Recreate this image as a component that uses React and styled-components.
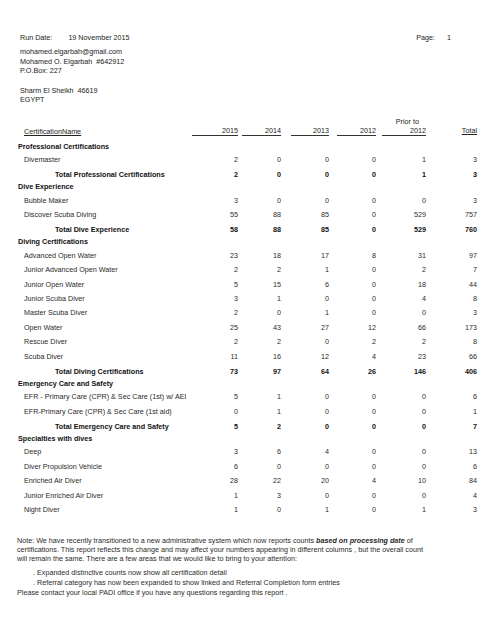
import styled, { createGlobalStyle } from "styled-components";

const GlobalStyle = createGlobalStyle`
  body {
    margin: 0;
    background: #fff;
    color: #222;
    font-family: "Liberation Sans", Arial, sans-serif;
    font-size: 7.2px;
  }
`;

const COLS = [52, 43, 48, 47, 50, 51];
const RULES = [46, 39, 38, 39, 44];

const sections = [
  {
    title: "Professional Certifications",
    items: [["Divemaster", [2, 0, 0, 0, 1, 3]]],
    total: ["Total Professional Certifications", [2, 0, 0, 0, 1, 3]],
  },
  {
    title: "Dive Experience",
    items: [
      ["Bubble Maker", [3, 0, 0, 0, 0, 3]],
      ["Discover Scuba Diving", [55, 88, 85, 0, 529, 757]],
    ],
    total: ["Total Dive Experience", [58, 88, 85, 0, 529, 760]],
  },
  {
    title: "Diving Certifications",
    items: [
      ["Advanced Open Water", [23, 18, 17, 8, 31, 97]],
      ["Junior Advanced Open Water", [2, 2, 1, 0, 2, 7]],
      ["Junior Open Water", [5, 15, 6, 0, 18, 44]],
      ["Junior Scuba Diver", [3, 1, 0, 0, 4, 8]],
      ["Master Scuba Diver", [2, 0, 1, 0, 0, 3]],
      ["Open Water", [25, 43, 27, 12, 66, 173]],
      ["Rescue Diver", [2, 2, 0, 2, 2, 8]],
      ["Scuba Diver", [11, 16, 12, 4, 23, 66]],
    ],
    total: ["Total Diving Certifications", [73, 97, 64, 26, 146, 406]],
  },
  {
    title: "Emergency Care and Safety",
    items: [
      ["EFR - Primary Care (CPR) & Sec Care (1st) w/ AED", [5, 1, 0, 0, 0, 6]],
      ["EFR-Primary Care (CPR) & Sec Care (1st aid)", [0, 1, 0, 0, 0, 1]],
    ],
    total: ["Total Emergency Care and Safety", [5, 2, 0, 0, 0, 7]],
  },
  {
    title: "Specialties with dives",
    items: [
      ["Deep", [3, 6, 4, 0, 0, 13]],
      ["Diver Propulsion Vehicle", [6, 0, 0, 0, 0, 6]],
      ["Enriched Air Diver", [28, 22, 20, 4, 10, 84]],
      ["Junior Enriched Air Diver", [1, 3, 0, 0, 0, 4]],
      ["Night Diver", [1, 0, 1, 0, 1, 3]],
    ],
  },
];

const Page = styled.div`
  width: 495px;
  padding: 33px 0 20px 18px;
  box-sizing: border-box;
`;

const TopLine = styled.div`
  display: flex;
  justify-content: space-between;
  padding: 0 44px 0 2px;
  line-height: 10px;
`;

const Pair = styled.div`
  display: flex;
  gap: ${(p) => p.$gap}px;
`;

const Address = styled.div`
  margin-top: ${(p) => p.$top}px;
  padding-left: 2px;
  line-height: 9.5px;
`;

const Table = styled.div`
  margin-top: 12.5px;
  display: flex;
  flex-direction: column;
`;

const HeadRow = styled.div`
  display: flex;
  align-items: flex-end;
  margin-bottom: 4px;
`;

const Row = styled.div`
  display: flex;
  align-items: center;
  height: ${(p) => p.$h}px;
  padding-top: ${(p) => p.$pt || 0}px;
  box-sizing: border-box;
  font-weight: ${(p) => (p.$bold ? "bold" : "normal")};
  color: ${(p) => (p.$bold ? "#111" : "#2a2a2a")};
`;

const Name = styled.div`
  width: 168px;
  flex: none;
  box-sizing: border-box;
  padding-left: ${(p) => p.$indent}px;
  white-space: nowrap;
  overflow: hidden;
`;

const Num = styled.div`
  width: ${(p) => p.$w}px;
  flex: none;
  text-align: right;
  white-space: nowrap;
`;

const HeadCell = styled.div`
  width: ${(p) => p.$w}px;
  flex: none;
  display: flex;
  justify-content: flex-end;
`;

const Ruled = styled.div`
  width: ${(p) => p.$w}px;
  border-bottom: 1px solid #333;
  text-align: right;
  line-height: 9px;
`;

const Underlined = styled.span`
  text-decoration: underline;
  line-height: 9px;
  padding-bottom: 1px;
`;

const Note = styled.div`
  margin-top: 20.5px;
  margin-left: -1px;
  color: #2a2a2a;
`;

const Para = styled.p`
  margin: 0;
  line-height: 8.7px;
`;

const Bullet = styled.p`
  margin: ${(p) => p.$top}px 0 0 16px;
  line-height: 10px;
`;

const Closing = styled.p`
  margin: 0;
  line-height: 9px;
`;

const Values = ({ values }) =>
  values.map((v, i) => (
    <Num key={i} $w={COLS[i]}>
      {v}
    </Num>
  ));

export default function App() {
  return (
    <>
      <GlobalStyle />
      <Page>
        <TopLine>
          <Pair $gap={16}>
            <span>Run Date:</span>
            <span>19 November 2015</span>
          </Pair>
          <Pair $gap={12}>
            <span>Page:</span>
            <span>1</span>
          </Pair>
        </TopLine>
        <Address $top={4.3}>
          mohamed.elgarbah@gmail.com
          <br />
          Mohamed O. Elgarbah&nbsp;&nbsp;#642912
          <br />
          P.O.Box: 227
        </Address>
        <Address $top={10}>
          Sharm El Sheikh&nbsp;&nbsp;46619
          <br />
          EGYPT
        </Address>

        <Table>
          <HeadRow>
            <Name $indent={6}>
              <Underlined>CertificationName</Underlined>
            </Name>
            <HeadCell $w={COLS[0]}>
              <Ruled $w={RULES[0]}>2015</Ruled>
            </HeadCell>
            <HeadCell $w={COLS[1]}>
              <Ruled $w={RULES[1]}>2014</Ruled>
            </HeadCell>
            <HeadCell $w={COLS[2]}>
              <Ruled $w={RULES[2]}>2013</Ruled>
            </HeadCell>
            <HeadCell $w={COLS[3]}>
              <Ruled $w={RULES[3]}>2012</Ruled>
            </HeadCell>
            <HeadCell $w={COLS[4]}>
              <Ruled $w={RULES[4]}>
                <span style={{ paddingRight: 7 }}>Prior to</span>
                <br />
                2012
              </Ruled>
            </HeadCell>
            <HeadCell $w={COLS[5]}>
              <Underlined>Total</Underlined>
            </HeadCell>
          </HeadRow>

          {sections.map((s) => (
            <div key={s.title}>
              <Row $h={12} $bold>
                <Name $indent={0}>{s.title}</Name>
              </Row>
              {s.items.map(([name, values]) => (
                <Row key={name} $h={14.45}>
                  <Name $indent={6}>{name}</Name>
                  <Values values={values} />
                </Row>
              ))}
              {s.total && (
                <Row $h={14.2} $pt={1} $bold>
                  <Name $indent={37}>{s.total[0]}</Name>
                  <Values values={s.total[1]} />
                </Row>
              )}
            </div>
          ))}
        </Table>

        <Note>
          <Para>
            Note: We have recently transitioned to a new administrative system which now reports counts{" "}
            <b>
              <i>based on processing date</i>
            </b>{" "}
            of
            <br />
            certifications. This report reflects this change and may affect your numbers appearing in different
            columns , but the overall count
            <br />
            will remain the same. There are a few areas that we would like to bring to your attention:
          </Para>
          <Bullet $top={4}>. Expanded distinctive counts now show all certification detail</Bullet>
          <Bullet $top={0.3}>
            . Referral category has now been expanded to show linked and Referral Completion form entries
          </Bullet>
          <Closing>Please contact your local PADI office if you have any questions regarding this report .</Closing>
        </Note>
      </Page>
    </>
  );
}
